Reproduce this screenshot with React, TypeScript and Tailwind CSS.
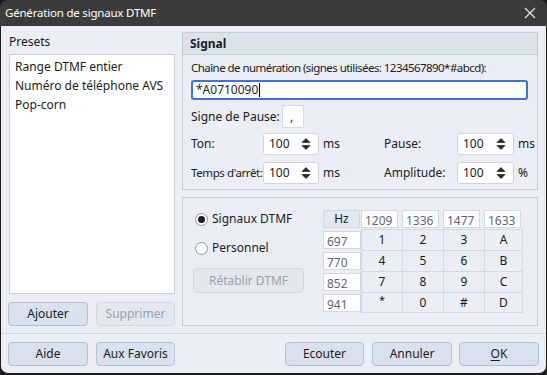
import * as React from "react";

// ---------------------------------------------------------------------------
// Small pieces
// ---------------------------------------------------------------------------

function Button({
  children,
  disabled = false,
  className = "",
}: {
  children: React.ReactNode;
  disabled?: boolean;
  className?: string;
}) {
  return (
    <div
      className={
        "flex h-[24px] items-center justify-center rounded-[4px] border text-[12px] " +
        (disabled
          ? "border-[#d3d9e3] bg-[#e3e7ef] text-[#9aa1ad] "
          : "border-[#b7c1d3] bg-[#dae1ee] text-[#1b1b1b] ") +
        className
      }
    >
      {children}
    </div>
  );
}

function SpinArrows() {
  return (
    <svg width="10" height="14" viewBox="0 0 10 14" className="ml-auto mr-[7px]" aria-hidden="true">
      <path d="M5 1.5 L9 5.5 L1 5.5 Z" fill="#2b2b2b" stroke="#2b2b2b" strokeWidth="0.8" strokeLinejoin="round" />
      <path d="M5 12.5 L9 8.5 L1 8.5 Z" fill="#2b2b2b" stroke="#2b2b2b" strokeWidth="0.8" strokeLinejoin="round" />
    </svg>
  );
}

function Spin({ value, width }: { value: string; width: string }) {
  return (
    <div className={"flex h-[22px] shrink-0 items-center rounded-[3px] border border-[#cfd5df] bg-white " + width}>
      <span className="pl-[5px] text-[12px] text-[#1b1b1b]">{value}</span>
      <SpinArrows />
    </div>
  );
}

function Radio({ checked, label }: { checked: boolean; label: string }) {
  return (
    <div className="flex h-[20px] items-center">
      <span className="flex h-[13px] w-[13px] items-center justify-center rounded-full border border-[#8c929c] bg-white">
        {checked && <span className="h-[7px] w-[7px] rounded-full bg-[#1e1e1e]" />}
      </span>
      <span className="ml-[4px] text-[12px] text-[#1b1b1b]">{label}</span>
    </div>
  );
}

const COL_FREQS = ["1209", "1336", "1477", "1633"];
const ROW_FREQS = ["697", "770", "852", "941"];
const KEYS = [
  ["1", "2", "3", "A"],
  ["4", "5", "6", "B"],
  ["7", "8", "9", "C"],
  ["*", "0", "#", "D"],
];

function DtmfGrid() {
  return (
    <div className="grid grid-cols-[38px_41px_41px_41px_39px] grid-rows-[19px_21px_21px_21px_21px]">
      {/* header row */}
      <div className="flex h-[18px] w-[37px] items-center justify-center border border-[#d3d9e3] bg-[#e2e7f0] text-[12px] text-[#1b1b1b]">
        Hz
      </div>
      {COL_FREQS.map((f) => (
        <div
          key={f}
          className="h-[18px] w-[37px] border border-[#d3d9e3] bg-white pl-[3px] pt-[2px] text-[12px] leading-[16px] text-[#5f6670]"
        >
          {f}
        </div>
      ))}

      {KEYS.map((row, r) => (
        <React.Fragment key={r}>
          <div className="mb-[1px] h-[18px] w-[38px] self-end border border-[#d3d9e3] bg-white pl-[3px] pt-[2px] text-[12px] leading-[16px] text-[#5f6670]">
            {ROW_FREQS[r]}
          </div>
          {row.map((k, c) => (
            <div
              key={k}
              className={
                "flex items-center justify-center border-[#d3d9e3] text-[12px] text-[#1b1b1b] " +
                "border-t border-l " +
                (c === 3 ? "border-r " : "") +
                (r === 3 ? "border-b " : "")
              }
            >
              {k === "*" ? <span className="translate-y-[-2px] text-[11px]">*</span> : k}
            </div>
          ))}
        </React.Fragment>
      ))}
    </div>
  );
}

// ---------------------------------------------------------------------------
// Main component
// ---------------------------------------------------------------------------

export default function App() {
  return (
    <div className="flex h-[375px] w-[547px] flex-col bg-[#1c1c1c] font-['Noto_Sans','Open_Sans',sans-serif] text-[12px]">
      {/* Title bar */}
      <div className="flex h-[26px] items-center rounded-t-[8px] bg-[#3b3b3b] pl-[5px] pr-[11px]">
        <span className="text-[11.5px] tracking-[-0.2px] text-white">Génération de signaux DTMF</span>
        <svg width="12" height="12" viewBox="0 0 12 12" className="ml-auto" aria-hidden="true">
          <path d="M1 1 L11 11 M11 1 L1 11" stroke="#e8e8e8" strokeWidth="1.1" />
        </svg>
      </div>

      {/* Body */}
      <div className="mx-px mb-[2px] flex flex-1 flex-col rounded-b-[7px] bg-[#ebeef5] pt-[6px]">
        <div className="flex h-[294px] pl-[7px]">
          {/* Presets column */}
          <div className="flex w-[167px] flex-col">
            <div className="h-[22px] pl-px pt-px text-[#1b1b1b]">Presets</div>
            <div className="ml-px h-[240px] border border-[#c9d0dc] bg-white pl-[5px] pt-[2px]">
              {["Range DTMF entier", "Numéro de téléphone AVS", "Pop-corn"].map((p) => (
                <div key={p} className="h-[19px] leading-[19px] text-[#1b1b1b]">
                  {p}
                </div>
              ))}
            </div>
            <div className="mt-[8px] flex gap-[8px]">
              <Button className="w-[80px]">Ajouter</Button>
              <Button className="w-[79px]" disabled>
                Supprimer
              </Button>
            </div>
          </div>

          {/* Right column */}
          <div className="ml-[7px] flex w-[356px] flex-col gap-[7px]">
            {/* Signal group */}
            <div className="h-[158px] border border-[#c6cdda]">
              <div className="flex h-[22px] items-center border-b border-[#c6cdda] bg-[#dce2ec] pl-[7px] font-bold text-[#1b1b1b]">
                Signal
              </div>
              <div className="pl-[8px] pr-[9px] pt-[4px] text-[#1b1b1b]">
                <div className="whitespace-nowrap text-[11.5px] leading-[18px] tracking-[-0.55px]">
                  Chaîne de numération (signes utilisées: 1234567890*#abcd):
                </div>
                <div className="mt-[3px] flex h-[20px] items-center rounded-[3px] border-2 border-[#3b75dd] bg-white pl-[3px]">
                  <span>*A0710090</span>
                  <span className="ml-px h-[14px] w-px bg-black" />
                </div>
                <div className="mt-[5px] flex items-center whitespace-nowrap">
                  <span className="w-[91px] shrink-0">Signe de Pause:</span>
                  <div className="h-[23px] w-[22px] rounded-[2px] border border-[#d3d9e3] bg-white pl-[7px] leading-[22px]">
                    ,
                  </div>
                </div>
                <div className="mt-[5px] flex items-center whitespace-nowrap">
                  <span className="w-[72px] shrink-0">Ton:</span>
                  <Spin value="100" width="w-[56px]" />
                  <span className="ml-[4px] w-[61px] shrink-0">ms</span>
                  <span className="w-[73px] shrink-0">Pause:</span>
                  <Spin value="100" width="w-[57px]" />
                  <span className="ml-[4px] shrink-0">ms</span>
                </div>
                <div className="mt-[7px] flex items-center whitespace-nowrap">
                  <span className="w-[72px] shrink-0 text-[11.5px] tracking-[-0.4px]">Temps d'arrêt:</span>
                  <Spin value="100" width="w-[56px]" />
                  <span className="ml-[4px] w-[61px] shrink-0">ms</span>
                  <span className="w-[73px] shrink-0">Amplitude:</span>
                  <Spin value="100" width="w-[57px]" />
                  <span className="ml-[4px] shrink-0">%</span>
                </div>
              </div>
            </div>

            {/* DTMF group */}
            <div className="flex h-[129px] border border-[#c6cdda]">
              <div className="flex w-[140px] flex-col pl-[10px] pt-[11px]">
                <div className="ml-[2px]">
                  <Radio checked label="Signaux DTMF" />
                </div>
                <div className="ml-[2px] mt-[9px]">
                  <Radio checked={false} label="Personnel" />
                </div>
                <Button className="mt-[10px] h-[25px] w-[111px]" disabled>
                  Rétablir DTMF
                </Button>
              </div>
              <div className="pt-[12px]">
                <DtmfGrid />
              </div>
            </div>
          </div>
        </div>

        {/* Separator */}
        <div className="mt-[7px] h-px bg-[#d2d8e3]" />

        {/* Bottom buttons */}
        <div className="mt-[8px] flex pl-[7px] pr-[7px]">
          <Button className="w-[80px]">Aide</Button>
          <Button className="ml-[8px] w-[79px]">Aux Favoris</Button>
          <Button className="ml-auto w-[79px]">Ecouter</Button>
          <Button className="ml-[8px] w-[80px]">Annuler</Button>
          <Button className="ml-[7px] w-[80px]">
            <span className="underline underline-offset-2">O</span>K
          </Button>
        </div>
      </div>
    </div>
  );
}
